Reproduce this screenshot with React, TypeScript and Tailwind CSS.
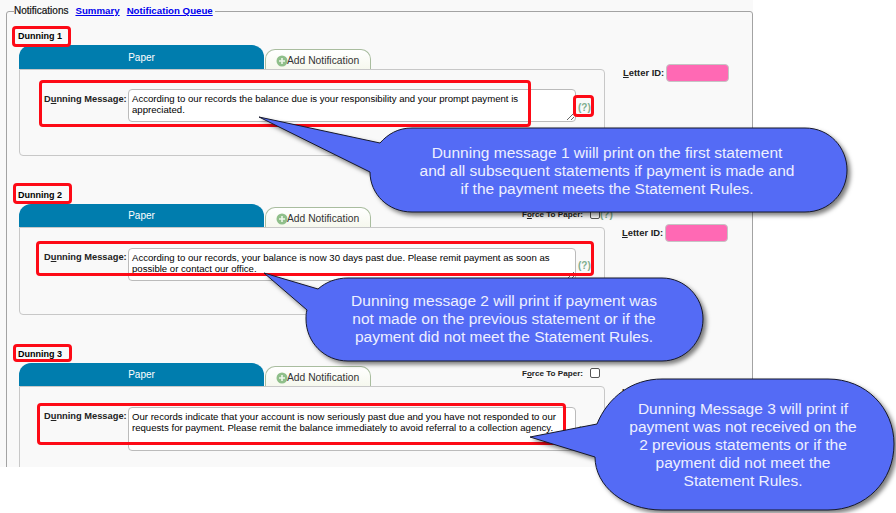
const sections = [
  {
    title: "Dunning 1",
    tabClass: "h-[24px]",
    textareaClass: "h-[33px] mt-[19px]",
    panelClass: "h-[87px]",
    letterClass: "ml-[18px] mt-[19px]",
    force: "none",
    message:
      "According to our records the balance due is your responsibility and your prompt payment is appreciated.",
  },
  {
    title: "Dunning 2",
    tabClass: "h-[23px]",
    textareaClass: "h-[33px] mt-[20px]",
    panelClass: "h-[88px]",
    letterClass: "ml-[17px] mt-[20px]",
    force: "help",
    message:
      "According to our records, your balance is now 30 days past due. Please remit payment as soon as possible or contact our office.",
  },
  {
    title: "Dunning 3",
    tabClass: "h-[23px]",
    textareaClass: "h-[44px] mt-[20px]",
    panelClass: "h-[88px]",
    letterClass: "ml-[17px] mt-[20px]",
    force: "plain",
    message:
      "Our records indicate that your account is now seriously past due and you have not responded to our requests for payment. Please remit the balance immediately to avoid referral to a collection agency.",
  },
];

function HelpMark() {
  return <span className="text-[10px] font-bold text-[#7fae8f]">(?)</span>;
}

function AddIcon() {
  return (
    <svg width="12" height="12" viewBox="0 0 12 12" className="shrink-0">
      <circle cx="6" cy="6" r="5.5" fill="#8fbf8a" />
      <path d="M6 3v6M3 6h6" stroke="#eef7ea" strokeWidth="1.6" />
    </svg>
  );
}

function DunningSection({ section }: { section: (typeof sections)[number] }) {
  return (
    <section>
      <div className="h-[18px] pt-[3px] pl-[11px] text-[9px] leading-[12px] font-bold text-black">{section.title}</div>
      <div className="flex items-start">
        <div className="ml-[12px] w-[586px] shrink-0">
          <div className={`flex items-end ${section.tabClass}`}>
            <div className="flex h-full w-[245px] items-center justify-center rounded-t-[12px] bg-[#007dae] text-[10px] text-white">
              Paper
            </div>
            <div className="ml-[1px] flex h-[20px] w-[106px] items-center rounded-t-[10px] border border-b-0 border-[#a9bd9f] bg-gradient-to-b from-white to-[#f6f8ee] pt-[3px] pl-[10px] text-[10.3px] text-[#333]">
              <AddIcon />
              <span className="-ml-[1px]">Add Notification</span>
            </div>
            {section.force !== "none" && (
              <div className="ml-auto flex items-center self-center pr-[5px] text-[8.1px] font-bold text-[#222]">
                <span className="mr-[7px]">
                  F<u>o</u>rce To Paper:
                </span>
                <input type="checkbox" readOnly className="mb-[2px] h-[10px] w-[10px] appearance-none rounded-[2px] border border-[#555] bg-white" />
                {section.force === "help" && (
                  <span className="-mr-[10px] w-[10px] text-[9px] leading-[10px]">
                    <HelpMark />
                  </span>
                )}
              </div>
            )}
          </div>
          <div className={`rounded-b-[4px] rounded-tr-[4px] border border-[#c8c8c8] pl-[24px] ${section.panelClass}`}>
            <div className="flex items-center">
              <label className="w-[84px] shrink-0 self-start pt-[23px] text-[9.3px] leading-[12px] font-bold whitespace-nowrap text-[#222]">
                D<u>u</u>nning Message:
              </label>
              <textarea
                readOnly
                defaultValue={section.message}
                className={`w-[448px] shrink-0 rounded-[4px] border border-[#bbb] bg-white px-[3px] py-[3px] text-[9.6px] leading-[11px] text-black outline-none ${section.textareaClass}`}
              />
              <span className="mt-[19px] ml-[2px]">
                <HelpMark />
              </span>
            </div>
          </div>
        </div>
        <div className={`flex items-center text-[9.4px] font-bold text-[#222] ${section.letterClass}`}>
          <span className="w-[43px] whitespace-nowrap">
            <u>L</u>etter ID:
          </span>
          <div className="h-[18px] w-[63px] rounded-[4px] border border-[#c4c4c4] bg-[#ff69b4]" />
        </div>
      </div>
    </section>
  );
}

const redBoxes = [
  "left-[12px] top-[26px] w-[59px] h-[21px]",
  "left-[39px] top-[80px] w-[492px] h-[47px]",
  "left-[573px] top-[95px] w-[21px] h-[22px]",
  "left-[13px] top-[183px] w-[59px] h-[21px]",
  "left-[36px] top-[241px] w-[558px] h-[35px]",
  "left-[13px] top-[344px] w-[59px] h-[18px]",
  "left-[37px] top-[403px] w-[529px] h-[42px]",
];

const callouts = [
  {
    d: "M259 117 L380 143 C388 134 398 128 412 128 H805 C830 128 847 148 847 170 C847 192 830 212 805 212 H412 C388 212 370 194 370 172 Z",
    box: "left-[367px] top-[144px] w-[480px]",
    lines: [
      "Dunning message 1 wiill print on the first statement",
      "and all subsequent statements if payment is made and",
      "if the payment meets the Statement Rules.",
    ],
  },
  {
    d: "M264 273 L318 289 C326 282 336 278 348 278 H662 C685 278 703 297 703 319 C703 342 685 361 662 361 H348 C324 361 306 342 306 319 C306 316 306 313 307 310 Z",
    box: "left-[304px] top-[292px] w-[400px]",
    lines: [
      "Dunning message 2 will print if payment was",
      "not made on the previous statement or if the",
      "payment did not meet the Statement Rules.",
    ],
  },
  {
    d: "M530 437 L597 424 C608 397 632 379 662 379 H828 C866 379 894 408 894 444 C894 481 866 510 828 510 H662 C624 510 595 486 595 457 Z",
    box: "left-[593px] top-[400px] w-[300px]",
    lines: [
      "Dunning Message 3 will print if",
      "payment was not received on the",
      "2 previous statements or if the",
      "payment did not meet the",
      "Statement Rules.",
    ],
  },
];

export default function App() {
  return (
    <div className="relative h-[513px] w-[896px] overflow-hidden bg-white font-['Liberation_Sans',Arial,sans-serif]">
      <div className="h-[467px] w-[753px] overflow-hidden bg-[#f9f9f9] pt-[5px] pl-[6px]">
        <fieldset className="h-[520px] w-[747px] rounded-[3px] border border-[#a3a3a3]">
          <legend className="ml-[7px] flex h-[12px] items-center pr-[2px] text-[9.7px] leading-[12px] font-bold">
            <span className="text-[10px] font-normal text-[#111] [-webkit-text-stroke:0.2px_#111]">Notifications</span>
            <a className="ml-[7px] text-[#0000ee] underline">Summary</a>
            <a className="ml-[7px] text-[#0000ee] underline">Notification Queue</a>
          </legend>
          <div className="flex flex-col gap-[30px] pt-[10px]">
            {sections.map((section) => (
              <DunningSection key={section.title} section={section} />
            ))}
          </div>
        </fieldset>
      </div>

      {redBoxes.map((box) => (
        <div key={box} className={`absolute rounded-[4px] border-[3px] border-[#fd0a16] ${box}`} />
      ))}

      <svg width="896" height="513" viewBox="0 0 896 513" className="absolute top-0 left-0 drop-shadow-[3px_3px_2px_rgba(0,0,0,0.5)]">
        {callouts.map((callout) => (
          <path key={callout.box} d={callout.d} fill="#546bf5" stroke="#15182c" strokeWidth="1" />
        ))}
      </svg>
      {callouts.map((callout) => (
        <div key={callout.box} className={`absolute text-center text-[15.5px] leading-[18px] text-[#eef0ff] ${callout.box}`}>
          {callout.lines.map((line) => (
            <div key={line} className="whitespace-nowrap">
              {line}
            </div>
          ))}
        </div>
      ))}
    </div>
  );
}
